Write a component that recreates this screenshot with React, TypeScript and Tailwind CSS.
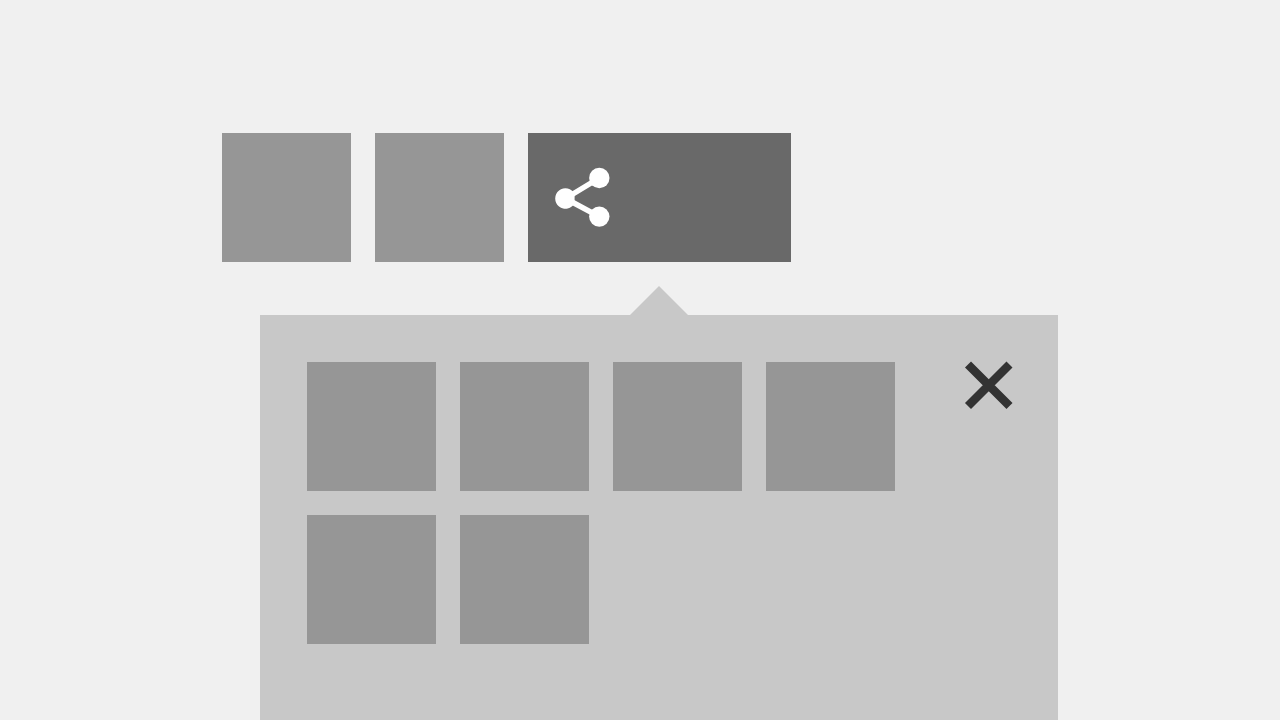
const TOOLBAR_ITEMS = ["First action", "Second action"];

const SHARE_TARGETS = [
  "Target 1",
  "Target 2",
  "Target 3",
  "Target 4",
  "Target 5",
  "Target 6",
];

function Tile({ label }: { label: string }) {
  return (
    <button
      type="button"
      aria-label={label}
      className="w-[129px] h-[129px] shrink-0 bg-[#969696]"
    />
  );
}

function ShareIcon() {
  return (
    <svg
      viewBox="0 0 54 60"
      className="w-[54px] h-[60px] overflow-visible"
      aria-hidden="true"
    >
      <path
        d="M9.5 30.5 43.3 10M9.5 30.5 43.3 48.6"
        fill="none"
        stroke="#fff"
        strokeWidth="5.5"
      />
      <path d="M18.6 26.1A10.2 10.2 0 1 0 18.6 34.9Z" fill="#fff" />
      <circle cx="43.3" cy="10" r="10.2" fill="#fff" />
      <circle cx="43.3" cy="48.6" r="10.2" fill="#fff" />
    </svg>
  );
}

function CloseIcon() {
  return (
    <svg
      viewBox="0 0 48 48"
      className="w-12 h-12 overflow-visible"
      aria-hidden="true"
    >
      <path
        d="M4 2.5 45.5 44M45.5 2.5 4 44"
        fill="none"
        stroke="#333"
        strokeWidth="8.5"
      />
    </svg>
  );
}

export default function App() {
  return (
    <main className="min-h-screen flex flex-col bg-[#f0f0f0] pt-[133px]">
      <div className="w-full max-w-[836px] mx-auto flex-1 flex flex-col">
        <div className="flex gap-6">
          {TOOLBAR_ITEMS.map((label) => (
            <Tile key={label} label={label} />
          ))}
          <button
            type="button"
            aria-label="Share"
            aria-expanded="true"
            className="w-[263px] h-[129px] pl-7 flex items-center bg-[#696969]"
          >
            <ShareIcon />
          </button>
        </div>

        {/* Popover, centred under the share button */}
        <div className="ml-[38px] mt-6 flex-1 flex flex-col">
          <svg
            viewBox="0 0 60 30"
            className="w-[60px] h-[30px] -mb-px self-center"
            aria-hidden="true"
          >
            <path d="M30 0 60 30H0Z" fill="#c8c8c8" />
          </svg>
          <section
            aria-label="Share targets"
            className="flex-1 flex items-start justify-between bg-[#c8c8c8] p-[47px] pr-[46px]"
          >
            <div className="max-w-[588px] flex flex-wrap gap-6">
              {SHARE_TARGETS.map((label) => (
                <Tile key={label} label={label} />
              ))}
            </div>
            <button type="button" aria-label="Close" className="shrink-0">
              <CloseIcon />
            </button>
          </section>
        </div>
      </div>
    </main>
  );
}
